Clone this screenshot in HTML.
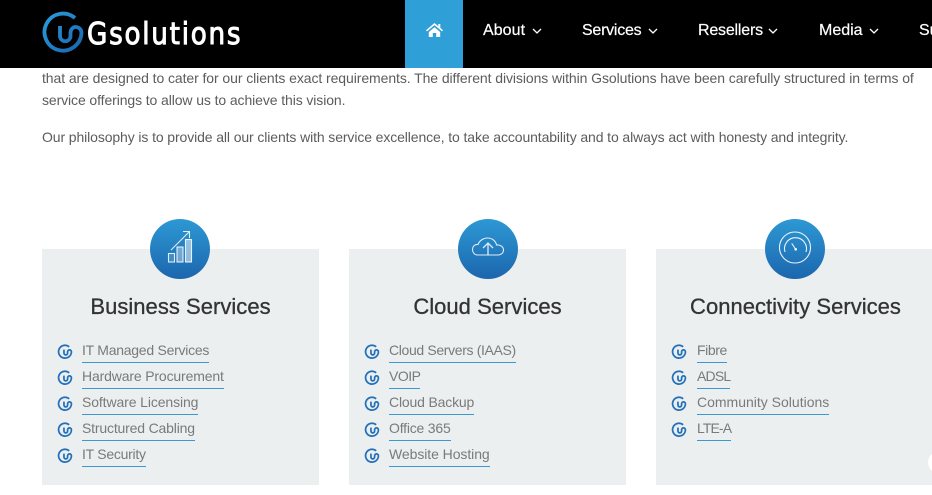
<!DOCTYPE html>
<html lang="en"><head><meta charset="utf-8"><title>Gsolutions</title>
<style>
html,body{margin:0;padding:0}
body{width:932px;height:495px;overflow:hidden;position:relative;background:#fff;font-family:"Liberation Sans",sans-serif}
.a{position:absolute;white-space:nowrap}
header{position:absolute;left:0;top:0;width:932px;height:68px;background:#000}
.home{position:absolute;left:405px;top:0;width:58px;height:68px;background:#2f9fd8}
.nav{position:absolute;top:21px;line-height:20px;font-size:16px;color:#fff;-webkit-text-stroke:.2px #fff}
.p{left:42px;font-size:14px;line-height:20px;color:#5c5c5c}
.card{position:absolute;top:249px;width:277px;height:236px;background:#ebeff0}
.circle{position:absolute;top:219px;width:60px;height:60px;border-radius:50%;background:linear-gradient(#2d98d4,#1c66ae)}
h2{position:absolute;top:294px;margin:0;font-size:22px;line-height:26px;font-weight:400;color:#333;text-align:center;white-space:nowrap;letter-spacing:.03px;-webkit-text-stroke:.3px #333}
.li{position:absolute;font-size:14px;line-height:20px;height:22px;color:#7a7a7a;border-bottom:1px solid #3b98d0;white-space:nowrap}
.ic{position:absolute;width:16px;height:16px}
</style></head><body>
<svg width="0" height="0" style="position:absolute"><defs>
<linearGradient id="g" x1="0" y1="0" x2="1" y2="1"><stop offset="0" stop-color="#2a9cdc"/><stop offset="1" stop-color="#1a66b0"/></linearGradient>
<symbol id="u" viewBox="0 0 46 46"><path d="M35 8A18.500 18.500 0 1 0 41.500 23C41.500 19 38.500 17 35.500 17C32.500 17 30.500 20 30.500 23V26A5.250 5.250 0 0 1 20 26V16" fill="none" stroke="#2470b8" stroke-width="5"/></symbol>
</defs></svg>

<div class="a p" style="top:68px;letter-spacing:-.08px">that are designed to cater for our clients exact requirements. The different divisions within Gsolutions have been carefully structured in terms of</div>
<div class="a p" style="top:90px;letter-spacing:-.1px">service offerings to allow us to achieve this vision.</div>
<div class="a p" style="top:127px;letter-spacing:-.11px">Our philosophy is to provide all our clients with service excellence, to take accountability and to always act with honesty and integrity.</div>

<header>
<svg class="a" style="left:40px;top:10px" width="46" height="46" viewBox="0 0 46 46"><path d="M35 8A18.500 18.500 0 1 0 41.500 23C41.500 19 38.500 17 35.500 17C32.500 17 30.500 20 30.500 23V26A5.250 5.250 0 0 1 20 26V16" fill="none" stroke="url(#g)" stroke-width="3.800"/></svg>
<div class="a" style="left:87px;top:14.500px;font-size:30px;line-height:40px;color:#fff;letter-spacing:2px;font-family:'DejaVu Sans',sans-serif;-webkit-text-stroke:1px #fff;transform-origin:0 50%;transform:scaleX(.874)">Gsolutions</div>
<div class="home"><svg class="a" style="left:21px;top:23px" width="17" height="14" viewBox="0 0 17 14"><path d="M8.500 0L0 7.200l1 1.200L8.500 2.100 16 8.400l1-1.200-2.700-2.300V1h-2v2.200zM2.800 9v5h4V10h3.400v4h4V9L8.500 4.200z" fill="#fff"/></svg></div>
<div class="nav" style="left:483px;letter-spacing:.05px">About</div>
<svg class="a" style="left:532px;top:28px" width="10" height="7"><path d="M1 1l4 4 4-4" fill="none" stroke="#fff" stroke-width="1.300"/></svg>
<div class="nav" style="left:582px;letter-spacing:-.25px">Services</div>
<svg class="a" style="left:648px;top:28px" width="10" height="7"><path d="M1 1l4 4 4-4" fill="none" stroke="#fff" stroke-width="1.300"/></svg>
<div class="nav" style="left:698px;letter-spacing:-.2px">Resellers</div>
<svg class="a" style="left:768px;top:28px" width="10" height="7"><path d="M1 1l4 4 4-4" fill="none" stroke="#fff" stroke-width="1.300"/></svg>
<div class="nav" style="left:819px">Media</div>
<svg class="a" style="left:869px;top:28px" width="10" height="7"><path d="M1 1l4 4 4-4" fill="none" stroke="#fff" stroke-width="1.300"/></svg>
<div class="nav" style="left:919px">Support</div>
</header>

<div class="card" style="left:42px"></div>
<div class="card" style="left:349px"></div>
<div class="card" style="left:656px;width:276px"></div>
<div class="a" style="left:928px;top:451px;width:24px;height:23px;border-radius:50%;background:#fff"></div>

<div class="circle" style="left:150px"><svg width="60" height="60" fill="none" stroke="#fff" stroke-opacity=".85"><g stroke-width="1.100"><rect x="18.500" y="34.500" width="6" height="8.500" fill="#fff" fill-opacity=".15"/><rect x="27" y="28" width="6" height="15" fill="#fff" fill-opacity=".35"/><rect x="35.500" y="20.500" width="6" height="22.500" fill="#fff" fill-opacity=".5"/><path d="M21 31L39 13M33 12.500h6.500V19"/></g></svg></div>
<div class="circle" style="left:458px"><svg width="60" height="60" fill="none" stroke="#fff" stroke-width="1.100" stroke-opacity=".85"><path d="M20 36C16 36 14.500 33 14.500 30.500C14.500 27 17.500 25 20 25.500C21.500 21.500 25.500 19 29.500 19C34.500 19 38 22.500 38.500 26C42.500 25.500 45.500 28 45.500 31C45.500 34 43 36 40 36Z"/><path d="M30 36V24.500M25 29l5-5 5 5" stroke-width="1.300"/></svg></div>
<div class="circle" style="left:765px"><svg width="60" height="60" fill="none" stroke="#fff" stroke-width="1.100" stroke-opacity=".9"><circle cx="30" cy="28.500" r="15.500"/><path d="M20 33a11 11 0 1 1 21 0"/><path d="M26.700 24.300l4 6" stroke-width="1"/><circle cx="30.700" cy="30.300" r="1.300" fill="#fff" stroke="none"/></svg></div>

<h2 style="left:42px;width:277px">Business Services</h2>
<h2 style="left:349px;width:277px">Cloud Services</h2>
<h2 style="left:656px;width:279px">Connectivity Services</h2>

<svg class="ic" style="left:56.500px;top:344px"><use href="#u"/></svg><div class="li" style="left:82px;top:340px;letter-spacing:-.26px">IT Managed Services</div>
<svg class="ic" style="left:56.500px;top:370px"><use href="#u"/></svg><div class="li" style="left:82px;top:366px;letter-spacing:-.15px">Hardware Procurement</div>
<svg class="ic" style="left:56.500px;top:396px"><use href="#u"/></svg><div class="li" style="left:82px;top:392px;letter-spacing:-.11px">Software Licensing</div>
<svg class="ic" style="left:56.500px;top:422px"><use href="#u"/></svg><div class="li" style="left:82px;top:418px;letter-spacing:-.17px">Structured Cabling</div>
<svg class="ic" style="left:56.500px;top:448px"><use href="#u"/></svg><div class="li" style="left:82px;top:444px;letter-spacing:-.27px">IT Security</div>

<svg class="ic" style="left:363.500px;top:344px"><use href="#u"/></svg><div class="li" style="left:389px;top:340px;letter-spacing:-.35px">Cloud Servers (IAAS)</div>
<svg class="ic" style="left:363.500px;top:370px"><use href="#u"/></svg><div class="li" style="left:389px;top:366px;letter-spacing:-.5px">VOIP</div>
<svg class="ic" style="left:363.500px;top:396px"><use href="#u"/></svg><div class="li" style="left:389px;top:392px;letter-spacing:-.17px">Cloud Backup</div>
<svg class="ic" style="left:363.500px;top:422px"><use href="#u"/></svg><div class="li" style="left:389px;top:418px;letter-spacing:-.2px">Office 365</div>
<svg class="ic" style="left:363.500px;top:448px"><use href="#u"/></svg><div class="li" style="left:389px;top:444px;letter-spacing:-.07px">Website Hosting</div>

<svg class="ic" style="left:670.500px;top:344px"><use href="#u"/></svg><div class="li" style="left:697px;top:340px;letter-spacing:-.4px">Fibre</div>
<svg class="ic" style="left:670.500px;top:370px"><use href="#u"/></svg><div class="li" style="left:697px;top:366px;letter-spacing:-.8px">ADSL</div>
<svg class="ic" style="left:670.500px;top:396px"><use href="#u"/></svg><div class="li" style="left:697px;top:392px">Community Solutions</div>
<svg class="ic" style="left:670.500px;top:422px"><use href="#u"/></svg><div class="li" style="left:697px;top:418px;letter-spacing:-.9px">LTE-A</div>
</body></html>
